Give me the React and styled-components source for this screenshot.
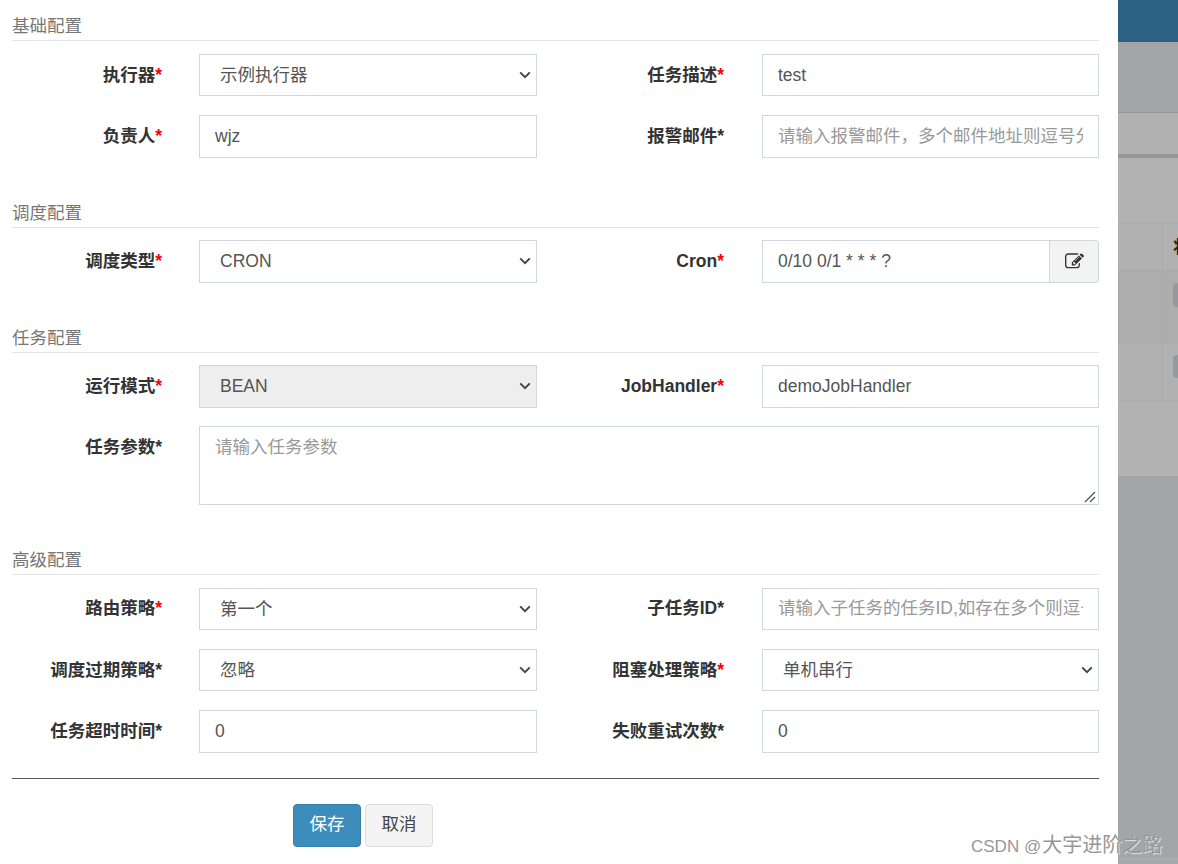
import React from "react";
import styled, { createGlobalStyle } from "styled-components";

const GlobalStyle = createGlobalStyle`
  * {
    box-sizing: border-box;
  }
  body {
    margin: 0;
    background: #fff;
    font-family: "Liberation Sans", "Noto Sans CJK SC", sans-serif;
  }
`;

const chevron =
  "data:image/svg+xml,%3Csvg xmlns='http://www.w3.org/2000/svg' width='12' height='8' viewBox='0 0 12 8'%3E%3Cpath d='M1.2 1.4 6 6.2l4.8-4.8' fill='none' stroke='%23444' stroke-width='1.9'/%3E%3C/svg%3E";

const grip =
  "data:image/svg+xml,%3Csvg xmlns='http://www.w3.org/2000/svg' width='15' height='15' viewBox='0 0 15 15'%3E%3Cpath d='M2 13 12 3M7 13l5-5' fill='none' stroke='%23555' stroke-width='1.3'/%3E%3C/svg%3E";

function EditIcon() {
  return (
    <svg width="19" height="19" viewBox="0 0 1792 1792" fill="currentColor">
      <path d="M888 1184l116-116-152-152-116 116v56h96v96h56zm440-720q-16-16-33 1l-350 350q-17 17-1 33t33-1l350-350q17-17 1-33zm80 594v190q0 119-84.5 203.5t-203.5 84.5h-832q-119 0-203.5-84.5t-84.5-203.5v-832q0-119 84.5-203.5t203.5-84.5h832q63 0 117 25 15 7 18 23 3 17-9 29l-49 49q-14 14-32 8-23-6-45-6h-832q-66 0-113 47t-47 113v832q0 66 47 113t113 47h832q66 0 113-47t47-113v-126q0-13 9-22l64-64q15-15 35-7t20 29zm-96-738l288 288-672 672h-288v-288zm444 132l-92 92-288-288 92-92q28-28 68-28t68 28l152 152q28 28 28 68t-28 68z" />
    </svg>
  );
}

function FormLabel({ text, red }) {
  return (
    <Label>
      {text}
      <Star $red={red}>*</Star>
    </Label>
  );
}

function SelectField({ label, red, value, disabled, right }) {
  return (
    <Field>
      <FormLabel text={label} red={red} />
      <Control $right={right}>
        <Select defaultValue={value} disabled={disabled}>
          <option>{value}</option>
        </Select>
      </Control>
    </Field>
  );
}

function InputField({ label, red, value, placeholder, right }) {
  return (
    <Field>
      <FormLabel text={label} red={red} />
      <Control $right={right}>
        <Input defaultValue={value} placeholder={placeholder} />
      </Control>
    </Field>
  );
}

export default function App() {
  return (
    <Page>
      <GlobalStyle />
      <Modal>
        <Form>
          <Section>
            <Legend>基础配置</Legend>
            <Row>
              <SelectField label="执行器" red value="示例执行器" />
              <InputField label="任务描述" red value="test" right />
            </Row>
            <Row>
              <InputField label="负责人" red value="wjz" />
              <InputField
                label="报警邮件"
                placeholder="请输入报警邮件，多个邮件地址则逗号分隔"
                right
              />
            </Row>
          </Section>

          <Section>
            <Legend>调度配置</Legend>
            <Row>
              <SelectField label="调度类型" red value="CRON" />
              <Field>
                <FormLabel text="Cron" red />
                <Control $right>
                  <InputGroup>
                    <GroupInput defaultValue="0/10 0/1 * * * ?" />
                    <Addon>
                      <EditIcon />
                    </Addon>
                  </InputGroup>
                </Control>
              </Field>
            </Row>
          </Section>

          <Section>
            <Legend>任务配置</Legend>
            <Row>
              <SelectField label="运行模式" red value="BEAN" disabled />
              <InputField label="JobHandler" red value="demoJobHandler" right />
            </Row>
            <Row>
              <Field>
                <FormLabel text="任务参数" />
                <WideControl>
                  <TextArea placeholder="请输入任务参数" />
                </WideControl>
              </Field>
            </Row>
          </Section>

          <Section>
            <Legend>高级配置</Legend>
            <Row>
              <SelectField label="路由策略" red value="第一个" />
              <InputField
                label="子任务ID"
                placeholder="请输入子任务的任务ID,如存在多个则逗号分隔"
                right
              />
            </Row>
            <Row>
              <SelectField label="调度过期策略" value="忽略" />
              <SelectField label="阻塞处理策略" red value="单机串行" right />
            </Row>
            <Row>
              <InputField label="任务超时时间" value="0" />
              <InputField label="失败重试次数" value="0" right />
            </Row>
          </Section>

          <Divider />
          <Actions>
            <SaveButton type="button">保存</SaveButton>
            <CancelButton type="button">取消</CancelButton>
          </Actions>
        </Form>
      </Modal>

      <Backdrop>
        <TopBar />
        <DimHeader />
        <DimTabs />
        <DimBox />
        <TableRow $height={48} $bg="#b1b1b1">
          <FirstCell />
          <LastCell>
            <HeadText>状态</HeadText>
          </LastCell>
        </TableRow>
        <TableRow $height={72} $bg="#adadad">
          <FirstCell />
          <LastCell>
            <DimButton $height={24} />
          </LastCell>
        </TableRow>
        <TableRow $height={59} $bg="#b1b1b1">
          <FirstCell />
          <LastCell>
            <DimButton $height={23} />
          </LastCell>
        </TableRow>
        <DimBoxEnd />
        <DimFooter />
      </Backdrop>

      <Watermark>
        <WatermarkLatin>CSDN @</WatermarkLatin>大宇进阶之路
      </Watermark>
    </Page>
  );
}

const Page = styled.div`
  position: relative;
  display: flex;
  width: 1178px;
  height: 864px;
  overflow: hidden;
`;

const Modal = styled.div`
  width: 1118px;
  height: 864px;
  flex: none;
  background: #fff;
  padding: 13.25px 19px 0 12px;
`;

const Form = styled.form`
  width: 1087px;
`;

const Section = styled.section`
  & + & {
    margin-top: 42px;
  }
`;

const Legend = styled.div`
  height: 28px;
  margin-bottom: 12.5px;
  border-bottom: 1px solid #e5e5e5;
  font-size: 17.5px;
  line-height: 27.5px;
  color: #777;
`;

const Row = styled.div`
  display: grid;
  grid-template-columns: 525px 562px;
  & + & {
    margin-top: 18.75px;
  }
`;

const Field = styled.div`
  display: flex;
  min-width: 0;
  &:has(textarea) {
    grid-column: 1 / -1;
  }
`;

const Label = styled.label`
  flex: 1;
  padding-top: 8.75px;
  font-size: 17.5px;
  font-weight: 700;
  line-height: 25px;
  text-align: right;
  white-space: nowrap;
  color: #333;
`;

const Star = styled.span`
  color: ${(p) => (p.$red ? "#f00" : "#333")};
`;

const Control = styled.div`
  flex: none;
  width: ${(p) => (p.$right ? "337px" : "338px")};
  margin-left: ${(p) => (p.$right ? "38px" : "37px")};
`;

const WideControl = styled.div`
  flex: none;
  width: 900px;
  margin-left: 37px;
`;

const Input = styled.input`
  display: block;
  width: 100%;
  height: 42.5px;
  padding: 7.5px 15px;
  border: 1px solid #d2d6de;
  border-radius: 0;
  outline: none;
  background: #fff;
  font-family: inherit;
  font-size: 17.5px;
  color: #555;
  &::placeholder {
    color: #999;
    opacity: 1;
  }
`;

const Select = styled.select`
  display: block;
  width: 100%;
  height: 42.5px;
  padding: 7.5px 30px 7.5px 20px;
  border: 1px solid #d2d6de;
  border-radius: 0;
  outline: none;
  appearance: none;
  background-color: ${(p) => (p.disabled ? "#eee" : "#fff")};
  background-image: url("${chevron}");
  background-repeat: no-repeat;
  background-position: right 5px center;
  opacity: 1;
  font-family: inherit;
  font-size: 17.5px;
  color: #555;
`;

const TextArea = styled.textarea`
  display: block;
  width: 100%;
  height: 78.75px;
  padding: 7.5px 15px;
  border: 1px solid #d2d6de;
  border-radius: 0;
  outline: none;
  font-family: inherit;
  font-size: 17.5px;
  line-height: 25px;
  color: #555;
  &::placeholder {
    color: #999;
    opacity: 1;
  }
  &::-webkit-resizer {
    background: url("${grip}") no-repeat;
  }
`;

const InputGroup = styled.div`
  display: flex;
`;

const GroupInput = styled(Input)`
  flex: 1;
  min-width: 0;
`;

const Addon = styled.span`
  display: flex;
  flex: none;
  align-items: center;
  justify-content: center;
  width: 49px;
  height: 42.5px;
  border: 1px solid #d2d6de;
  border-left: 0;
  border-radius: 0 4px 4px 0;
  background: #f3f3f3;
  color: #333;
`;

const Divider = styled.hr`
  height: 1px;
  margin: 25px 0 0;
  border: 0;
  background: #555;
`;

const Actions = styled.div`
  display: flex;
  gap: 4px;
  margin: 25.5px 0 0 281px;
`;

const BaseButton = styled.button`
  width: 68px;
  height: 42.5px;
  padding: 0 0 5px;
  border-radius: 4px;
  font-family: inherit;
  font-size: 17.5px;
`;

const SaveButton = styled(BaseButton)`
  border: 1px solid #367fa9;
  background: #3c8dbc;
  color: #fff;
`;

const CancelButton = styled(BaseButton)`
  border: 1px solid #ddd;
  background: #f4f4f4;
  color: #444;
`;

const Backdrop = styled.div`
  flex: 1;
  display: flex;
  flex-direction: column;
  min-width: 0;
  background: #a3a6a9;
`;

const TopBar = styled.div`
  height: 42px;
  background: #2b6284;
`;

const DimHeader = styled.div`
  height: 71px;
  border-bottom: 1px solid #95969b;
  background: #a2a6a9;
`;

const DimTabs = styled.div`
  height: 45px;
  border-bottom: 4px solid #96979c;
  background: #b1b1b1;
`;

const DimBox = styled.div`
  height: 64px;
  background: #b2b2b2;
`;

const TableRow = styled.div`
  display: flex;
  height: ${(p) => p.$height}px;
  border-top: 1px solid #a9a9a9;
  background: ${(p) => p.$bg};
  overflow: hidden;
`;

const FirstCell = styled.div`
  flex: none;
  width: 45px;
  border-right: 1px solid #a9a9a9;
`;

const LastCell = styled.div`
  flex: 1;
  padding: 12px 0 0 10px;
  overflow: hidden;
`;

const HeadText = styled.span`
  display: block;
  width: 40px;
  font-size: 17.5px;
  font-weight: 700;
  line-height: 25px;
  white-space: nowrap;
  color: #222;
`;

const DimButton = styled.div`
  width: 40px;
  height: ${(p) => p.$height}px;
  border-radius: 4px;
  background: #97999e;
`;

const DimBoxEnd = styled.div`
  height: 76px;
  border-top: 1px solid #a9a9a9;
  border-bottom: 1px solid #a2a2a2;
  background: #b2b2b2;
`;

const DimFooter = styled.div`
  height: 6px;
  margin-top: auto;
  border-top: 1px solid #b0b0b0;
  background: #a6a8aa;
`;

const Watermark = styled.div`
  position: absolute;
  left: 971px;
  top: 831px;
  font-size: 20px;
  line-height: 28px;
  white-space: nowrap;
  color: #979797;
  text-shadow: 1px 1px 1px rgba(255, 255, 255, 0.7);
`;

const WatermarkLatin = styled.span`
  font-size: 17px;
  margin-right: 1px;
`;
